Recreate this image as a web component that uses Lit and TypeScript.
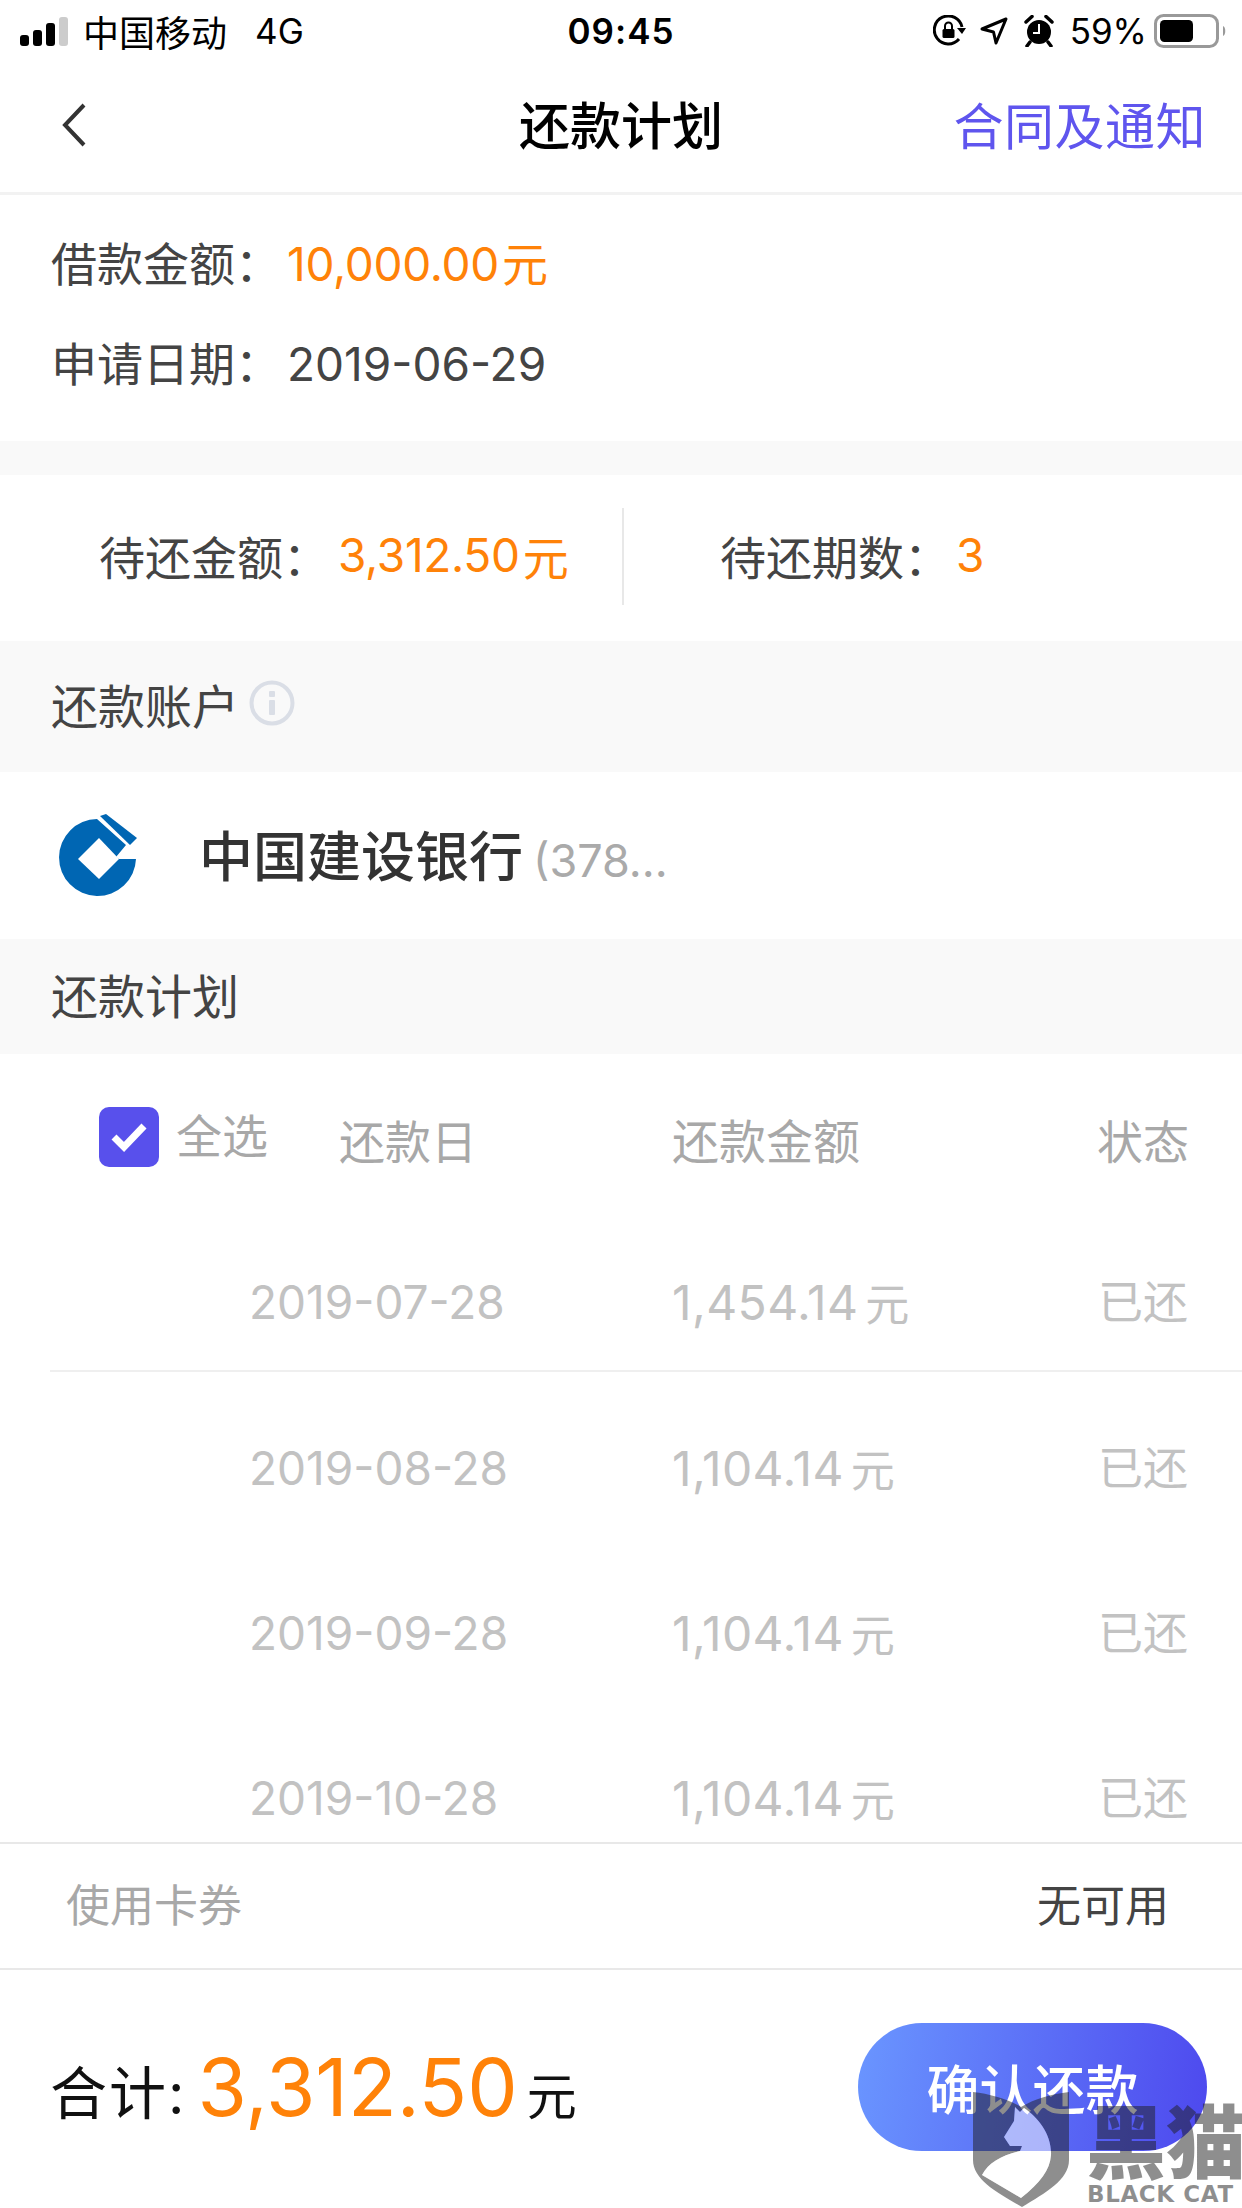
import { LitElement, html, css, svg } from 'lit';
import { customElement } from 'lit/decorators.js';

const ROWS = [
  { date: '2019-07-28', amount: '1,454.14', ruled: true },
  { date: '2019-08-28', amount: '1,104.14', ruled: false },
  { date: '2019-09-28', amount: '1,104.14', ruled: false },
  { date: '2019-10-28', amount: '1,104.14', ruled: false },
];

const LOGO = svg`<svg class="logo" viewBox="0 0 100 100">
  <path fill="#0066b3" d="M86 53A38.5 38.5 0 1 1 47 13L76 39L66 51L69 53Z" />
  <polygon fill="#fff" points="28,53 49,32 69,53 49,73" />
  <polygon fill="#0066b3" points="50,10 56,8 87,32 80,39" />
</svg>`;

const WATERMARK_SHIELD = svg`<svg class="wm-shield" viewBox="0 0 123 123">
  <path fill="rgba(30,30,30,.5)" fill-rule="evenodd" d="M13 7C30 9 48 14 61 22C74 14 92 9 109 7L109 75C109 95 85 108 62 122C38 108 13 95 13 75ZM22 90C28 78 42 70 60 66L62 61L50 61L44 52L54 36L55 22L60 27L64 23C78 32 92 50 91 70C90 85 80 98 61 113Z" />
  <path fill="rgba(255,255,255,.5)" d="M22 90C28 78 42 70 60 66L62 61L50 61L44 52L54 36L55 22L60 27L64 23C78 32 92 50 91 70C90 85 80 98 61 113Z" />
</svg>`;

@customElement('status-bar')
class StatusBar extends LitElement {
  static styles = css`
    :host {
      display: flex;
      align-items: center;
      height: 62px;
      padding: 0 14px 0 20px;
      font-family: 'Inter', 'Noto Sans CJK SC', sans-serif;
      font-size: 34px;
      color: #000;
    }
    .signal {
      display: flex;
      align-items: flex-end;
      gap: 4px;
      height: 29px;
      margin-right: 15px;
    }
    .signal i {
      width: 9px;
      background: #000;
      border-radius: 3px;
    }
    .signal i:last-child {
      background: #ccc;
    }
    .carrier {
      font-family: 'Noto Sans CJK SC', sans-serif;
      font-size: 36px;
      margin-right: 28px;
    }
    .net {
      font-size: 35px;
    }
    .time {
      position: absolute;
      left: 0;
      right: 0;
      text-align: center;
      font-weight: 600;
      font-size: 35px;
      letter-spacing: 1px;
    }
    .right {
      margin-left: auto;
      display: flex;
      align-items: center;
    }
    .right svg {
      display: block;
    }
    .pct {
      font-size: 35px;
      margin: 0 7px 0 16px;
    }
  `;

  render() {
    return html`
      <div class="signal">
        <i style="height:11px"></i><i style="height:16px"></i><i style="height:23px"></i><i style="height:29px"></i>
      </div>
      <span class="carrier">中国移动</span>
      <span class="net">4G</span>
      <span class="time">09:45</span>
      <div class="right">
        <svg width="34" height="32" viewBox="0 0 34 32">
          <path d="M26 24A14 14 0 1 1 29 12" fill="none" stroke="#000" stroke-width="3" />
          <path d="M24 13H33L29 19Z" fill="#000" />
          <rect x="9.500" y="14" width="12" height="9" rx="1.500" fill="#000" />
          <path d="M12 14V11A3.500 3.500 0 0 1 19 11V14" fill="none" stroke="#000" stroke-width="2" />
        </svg>
        <svg style="margin-left:13px" width="28" height="28" viewBox="0 0 28 28">
          <path d="M26 2L16 26L13.500 15L2 12Z" fill="none" stroke="#000" stroke-width="3" stroke-linejoin="round" />
        </svg>
        <svg style="margin-left:16px" width="30" height="32" viewBox="0 0 30 32">
          <circle cx="15" cy="17" r="12" fill="#000" />
          <path d="M2 7L8 1.500M28 7L22 1.500M6 27L3 31M24 27L27 31" stroke="#000" stroke-width="3.500" stroke-linecap="round" />
          <path d="M15 9V18H9" fill="none" stroke="#fff" stroke-width="2" />
        </svg>
        <span class="pct">59%</span>
        <svg width="74" height="34" viewBox="0 0 74 34">
          <rect x="1.500" y="1.500" width="62" height="31" rx="8" fill="none" stroke="#999" stroke-width="3" />
          <rect x="6" y="6" width="33" height="22" rx="4.500" fill="#000" />
          <path d="M69 12C72 13 72 21 69 22Z" fill="#999" />
        </svg>
      </div>
    `;
  }
}

@customElement('app-root')
export class AppRoot extends LitElement {
  static styles = css`
    :host {
      display: flex;
      flex-direction: column;
      position: relative;
      height: 2208px;
      overflow: hidden;
      background: #fff;
      font-family: 'Inter', 'Noto Sans CJK SC', sans-serif;
      color: #444;
    }
    .nav {
      display: flex;
      align-items: center;
      justify-content: space-between;
      height: 130px;
      box-sizing: content-box;
      padding: 0 36px 0 62px;
      border-bottom: 3px solid #f2f2f2;
    }
    .nav .back {
      display: block;
      width: 24px;
      height: 44px;
      margin-bottom: 5px;
    }
    .nav .title {
      position: absolute;
      left: 0;
      right: 0;
      text-align: center;
      font-size: 51px;
      font-weight: 500;
      color: #000;
      margin-bottom: 9px;
    }
    .nav .link {
      font-size: 50px;
      letter-spacing: 0.5px;
      color: #5f55ee;
      margin-bottom: 9px;
    }
    .info {
      display: flex;
      flex-direction: column;
      gap: 48px;
      padding: 43px 0 0 51px;
      border-bottom: 34px solid #f9f9f9;
      font-size: 46px;
      line-height: 52px;
      height: 203px;
    }
    .line {
      display: flex;
      align-items: center;
    }
    .label {
      font-size: 46px;
      margin-right: 6px;
      white-space: nowrap;
    }
    .orange {
      color: #ff8208;
    }
    .money {
      letter-spacing: -0.3px;
    }
    .unit {
      margin-left: 3px;
    }
    .summary {
      display: flex;
      align-items: center;
      height: 166px;
      padding-bottom: 3px;
      box-sizing: border-box;
      font-size: 46px;
    }
    .cell {
      display: flex;
      align-items: center;
      height: 97px;
      padding-bottom: 4px;
      box-sizing: border-box;
    }
    .cell.left {
      width: 622px;
      padding-left: 99px;
    }
    .cell.left .label {
      margin-right: 9px;
    }
    .cell.right {
      padding-left: 96px;
      border-left: 2px solid #e8e8e8;
    }
    .band {
      display: flex;
      align-items: center;
      box-sizing: border-box;
      background: #f9f9f9;
      padding: 0 0 7px 51px;
      font-size: 47px;
      color: #444;
    }
    .band.account {
      height: 131px;
    }
    .band.plan {
      height: 115px;
    }
    .info-icon {
      display: block;
      width: 46px;
      height: 46px;
      margin-left: 10px;
    }
    .bank {
      display: flex;
      align-items: center;
      height: 167px;
      padding-left: 50px;
      font-weight: 500;
      font-size: 54px;
      color: #333;
    }
    .bank-name {
      margin-bottom: 5px;
    }
    .logo {
      display: block;
      width: 100px;
      height: 100px;
      margin-right: 49px;
    }
    .bank small {
      margin-left: 10px;
      font-size: 45px;
      font-weight: 400;
      color: #aaa;
    }
    .table {
      flex: 1;
      min-height: 0;
      overflow: hidden;
    }
    .thead {
      display: flex;
      align-items: center;
      box-sizing: border-box;
      height: 180px;
      padding: 0 0 11px 99px;
      font-size: 46px;
      color: #a8a8a8;
    }
    .check {
      display: flex;
      align-items: center;
      justify-content: center;
      width: 60px;
      height: 60px;
      border-radius: 10px;
      background: #5850ec;
      margin: -4px 17px 0 0;
    }
    .check svg {
      display: block;
    }
    .all {
      width: 163px;
      margin-top: -12px;
    }
    .th-date {
      width: 333px;
    }
    .th-amount {
      width: 425px;
      font-size: 47px;
    }
    .tr {
      display: flex;
      align-items: center;
      height: 138px;
      margin-bottom: 27px;
      padding-left: 249px;
      font-size: 46px;
      color: #c2c2c2;
    }
    .tr.ruled {
      box-sizing: border-box;
      margin-left: 50px;
      padding-left: 199px;
      border-bottom: 2px solid #efefef;
    }
    .td-date {
      width: 423px;
    }
    .td-amount {
      display: flex;
      align-items: center;
      width: 426px;
      font-size: 48px;
      letter-spacing: 0.4px;
    }
    .td-amount .yuan {
      font-size: 44px;
      margin-left: 7px;
    }
    .td-status {
      font-size: 45px;
      margin-bottom: 5px;
    }
    .coupon {
      display: flex;
      align-items: center;
      justify-content: space-between;
      padding: 0 73px 6px 66px;
      box-sizing: border-box;
      height: 128px;
      border-top: 2px solid #e8e8e8;
      border-bottom: 2px solid #e8e8e8;
      font-size: 44px;
      color: #a8a8a8;
    }
    .coupon .value {
      color: #444;
    }
    .footer {
      display: flex;
      align-items: center;
      height: 238px;
      padding: 0 35px 0 50px;
      font-size: 57px;
      color: #111;
    }
    .sum-label {
      letter-spacing: 2px;
    }
    .total {
      font-size: 80px;
      color: #ff8208;
      margin: 0 9px 6px 11px;
    }
    .footer .yuan {
      font-size: 50px;
      margin-top: 8px;
    }
    .pay {
      display: flex;
      align-items: center;
      justify-content: center;
      width: 349px;
      height: 128px;
      margin: -4px 0 0 auto;
      border-radius: 64px;
      background: linear-gradient(100deg, #6a96ff, #4d48ee);
      color: #fff;
      font-size: 53px;
      font-weight: 500;
    }
    .wm {
      position: absolute;
      left: 960px;
      top: 2085px;
      width: 282px;
      height: 123px;
      overflow: hidden;
    }
    .wm-shield {
      position: absolute;
      left: 0;
      top: 0;
      width: 123px;
      height: 123px;
    }
    .wm-cn {
      position: absolute;
      left: 126px;
      top: 0;
      font-family: 'Noto Sans CJK SC', sans-serif;
      font-size: 80px;
      line-height: 104px;
      font-weight: 900;
      color: rgba(30, 30, 30, 0.5);
      white-space: nowrap;
    }
    .wm-en {
      position: absolute;
      left: 127px;
      top: 97px;
      font-family: 'DejaVu Sans', sans-serif;
      font-weight: 700;
      font-size: 23px;
      line-height: 24px;
      letter-spacing: 0.6px;
      color: rgba(30, 30, 30, 0.5);
      white-space: nowrap;
    }
  `;

  render() {
    return html`
      <status-bar></status-bar>
      <div class="nav">
        <svg class="back" viewBox="0 0 24 44">
          <path d="M22 2L3 22L22 42" fill="none" stroke="#333" stroke-width="4" />
        </svg>
        <span class="title">还款计划</span>
        <span class="link">合同及通知</span>
      </div>
      <div class="info">
        <div class="line">
          <span class="label">借款金额：</span>
          <span class="orange money">10,000.00</span><span class="orange unit">元</span>
        </div>
        <div class="line">
          <span class="label">申请日期：</span><span>2019-06-29</span>
        </div>
      </div>
      <div class="summary">
        <div class="cell left">
          <span class="label">待还金额：</span>
          <span class="orange money">3,312.50</span><span class="orange unit">元</span>
        </div>
        <div class="cell right">
          <span class="label">待还期数：</span><span class="orange">3</span>
        </div>
      </div>
      <div class="band account">
        还款账户
        <svg class="info-icon" viewBox="0 0 46 46">
          <circle cx="23" cy="23" r="20.500" fill="none" stroke="#dadee6" stroke-width="4" />
          <rect x="20" y="11" width="6" height="6" rx="1" fill="#dadee6" />
          <rect x="20" y="20" width="6" height="15" rx="1" fill="#dadee6" />
        </svg>
      </div>
      <div class="bank">
        ${LOGO}
        <span class="bank-name">中国建设银行<small>(378...</small></span>
      </div>
      <div class="band plan">还款计划</div>
      <div class="table">
        <div class="thead">
          <span class="check">
            <svg width="38" height="30" viewBox="0 0 38 30">
              <path d="M4 15L14 25L34 4" fill="none" stroke="#fff" stroke-width="7" />
            </svg>
          </span>
          <span class="all">全选</span>
          <span class="th-date">还款日</span>
          <span class="th-amount">还款金额</span>
          <span>状态</span>
        </div>
        ${ROWS.map(
          (row) => html`
            <div class="tr ${row.ruled ? 'ruled' : ''}">
              <span class="td-date">${row.date}</span>
              <span class="td-amount">${row.amount}<span class="yuan">元</span></span>
              <span class="td-status">已还</span>
            </div>
          `,
        )}
      </div>
      <div class="coupon">
        <span>使用卡券</span>
        <span class="value">无可用</span>
      </div>
      <div class="footer">
        <span class="sum-label">合计:</span>
        <span class="total">3,312.50</span>
        <span class="yuan">元</span>
        <span class="pay">确认还款</span>
      </div>
      <div class="wm">
        ${WATERMARK_SHIELD}
        <span class="wm-cn">黑猫</span>
        <span class="wm-en">BLACK CAT</span>
      </div>
    `;
  }
}
